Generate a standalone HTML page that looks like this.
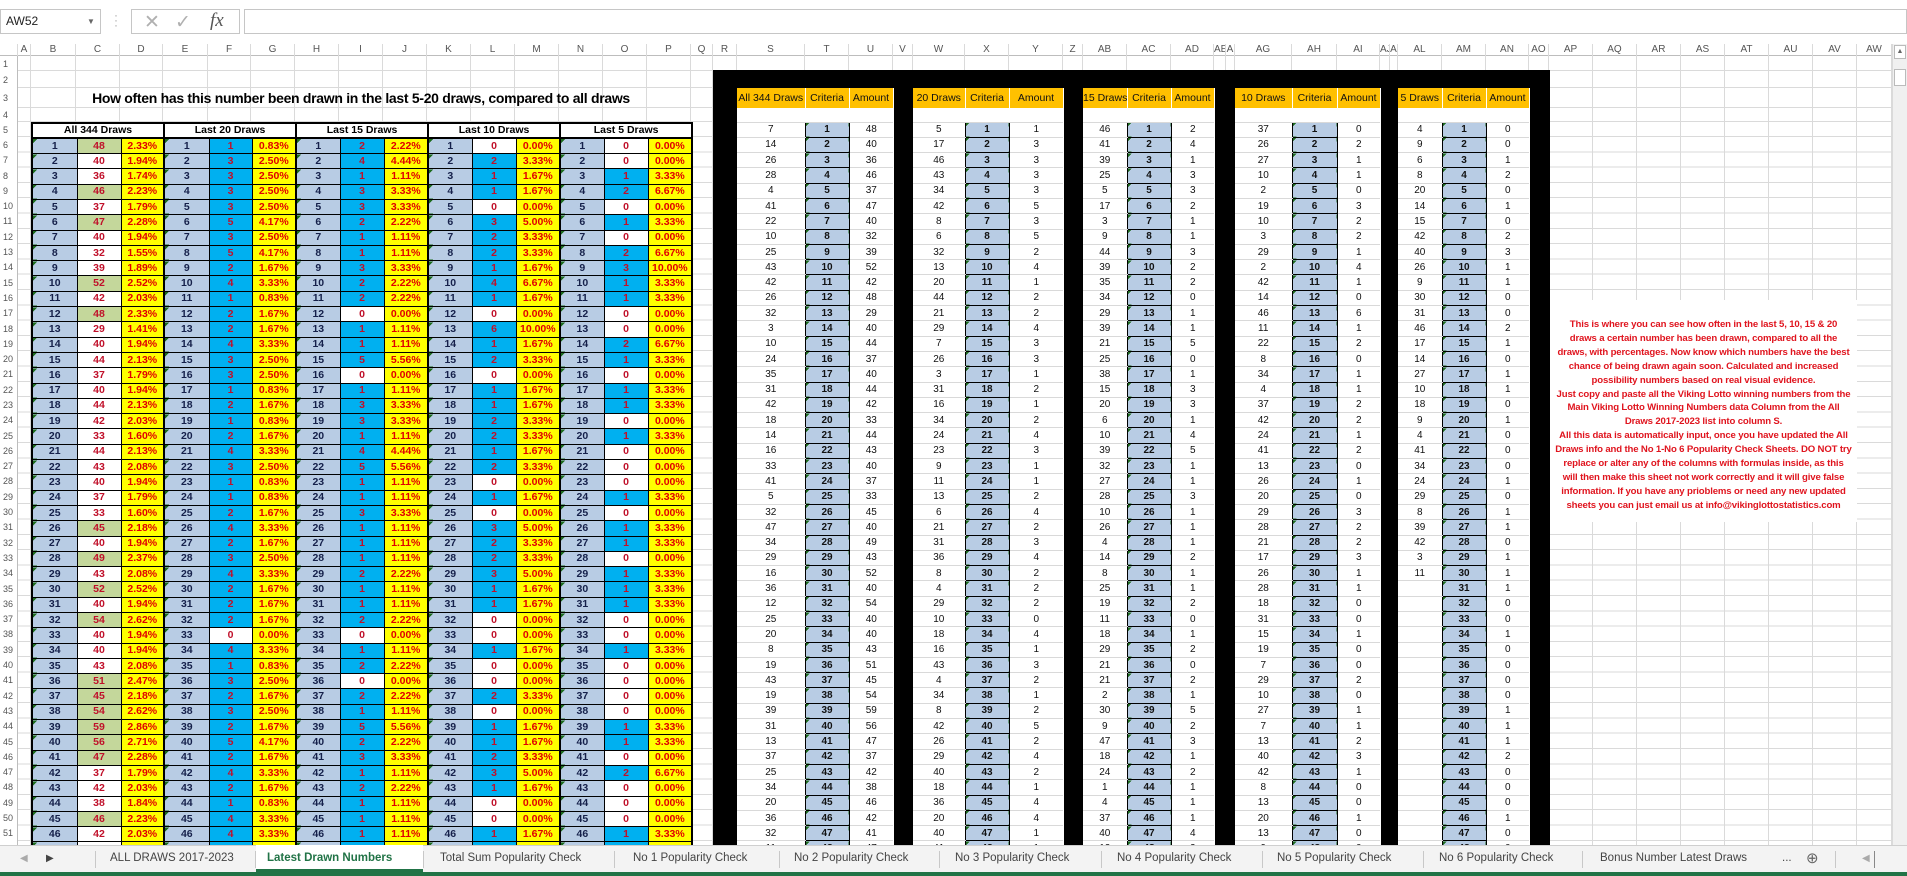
<!DOCTYPE html>
<html><head><meta charset="utf-8">
<style>
*{margin:0;padding:0;box-sizing:border-box}
body{width:1907px;height:876px;overflow:hidden;background:#fff;position:relative;font-family:"Liberation Sans Narrow","Liberation Sans",sans-serif;}
.abs{position:absolute}
#top{left:0;top:0;width:1907px;height:44px;background:#fff}
.box{position:absolute;border:1px solid #c6c6c6;background:#fff}
#ch{left:0;top:44px;height:12px;display:flex;border-bottom:1px solid #bdbdbd}
#ch div{height:12px;font:10px "Liberation Sans",sans-serif;color:#555;text-align:center;line-height:12px;border-right:1px solid #dadada;overflow:hidden;flex:none}
#gv{left:0;top:56px;height:789px;display:flex}
#gv div{height:789px;border-right:1px solid #dadada;flex:none}
#gh{left:18px;top:56px;width:1874px}
#gh div{border-bottom:1px solid #dadada}
#rh{left:0;top:56px;width:18px;border-right:1px solid #bdbdbd;height:789px}
#rh div{font:9px "Liberation Sans",sans-serif;color:#555;padding-left:3px;display:flex;align-items:center}
#title{left:31px;top:88px;width:660px;height:20px;text-align:center;font:bold 14px "Liberation Sans",sans-serif;line-height:20px;letter-spacing:-0.3px}
table{border-collapse:collapse;table-layout:fixed;position:absolute}
#lt{left:31px;top:122px;width:660px}
#lt td{border:1px solid #000;height:15.3px;text-align:center;font-weight:bold;font-size:10.5px;line-height:13px;padding:0;overflow:hidden;white-space:nowrap}
#lt tr.h td{border:2px solid #000;color:#000;background:#fff;font-size:10.5px}
#lt td:nth-child(3n+1){background:#b8cce4 linear-gradient(135deg,#1d6b1d 3px,transparent 3px);color:#15204a;border-left:2px solid #000}
#lt td:nth-child(3n+2){background:#00b0f0;color:#c0102a}
#lt td:nth-child(3n){background:#ff0;color:#e00000}
#lt td:nth-child(15){border-right:2px solid #000}
#lt td:nth-child(2){background:#fff}
#lt td.g{background:#c4d79b}
#lt td.z{background:#fff}
#blk{left:713px;top:70px;width:837px;height:775px;background:#000}
.rt{top:88px;background:#fff}
.rt td{height:15.3px;border-bottom:1px solid #d9d9d9;text-align:center;font-size:10px;line-height:13px;padding:0;color:#111;white-space:nowrap;overflow:hidden}
.rt tr.o td{background:#ffc000;height:20px;font:10.5px "Liberation Sans",sans-serif;color:#111;border:none;border-right:1px solid #fff}
.rt tr.e td{height:14px}
.rt tr.d td:nth-child(2){background:#b8cce4 linear-gradient(135deg,#1d6b1d 3px,transparent 3px);border:1px solid #000;font-weight:bold}
#tb{left:1550px;top:300px;width:307px;height:222px;background:#fff;color:#e0141e;font:bold 9.6px "Liberation Sans",sans-serif;text-align:center;line-height:13.9px;padding-top:18px;white-space:nowrap;letter-spacing:-0.15px}
#vs{left:1892px;top:44px;width:15px;height:801px;background:#f0f0f0;border-left:1px solid #dadada}
#tabs{left:0;top:845px;width:1907px;height:27px;background:#f3f3f3;border-top:1px solid #cfcfcf}
#tabs span{position:absolute;top:6px;font-size:11.5px;color:#444;white-space:nowrap}
#tabs i{position:absolute;top:5px;width:1px;height:17px;background:#c8c8c8}
#grn{left:0;top:872px;width:1907px;height:4px;background:#217346}
</style></head><body>

<div id="top" class="abs">
 <div class="box" style="left:0;top:9px;width:101px;height:25px;font:12px 'Liberation Sans',sans-serif;line-height:23px;padding-left:5px;color:#222">AW52<span style="position:absolute;left:86px;top:0;font-size:8px;color:#666">▼</span></div>
 <div class="abs" style="left:114px;top:13px;color:#aaa;font-size:12px;line-height:5px">·<br>·<br>·</div>
 <div class="box" style="left:131px;top:9px;width:109px;height:25px">
  <span class="abs" style="left:12px;top:1px;font-size:19px;color:#b0b0b0">✕</span>
  <span class="abs" style="left:43px;top:1px;font-size:19px;color:#b0b0b0">✓</span>
  <span class="abs" style="left:78px;top:0;font:italic 19px 'Liberation Serif',serif;color:#555">fx</span>
 </div>
 <div class="box" style="left:244px;top:9px;width:1663px;height:25px"></div>
</div>

<div id="ch" class="abs">
<div style="width:18px"></div><div style="width:13px">A</div><div style="width:45px">B</div><div style="width:44px">C</div><div style="width:43px">D</div><div style="width:45px">E</div><div style="width:43px">F</div><div style="width:44px">G</div><div style="width:44px">H</div><div style="width:44px">I</div><div style="width:44px">J</div><div style="width:44px">K</div><div style="width:44px">L</div><div style="width:44px">M</div><div style="width:44px">N</div><div style="width:44px">O</div><div style="width:44px">P</div><div style="width:22px">Q</div><div style="width:24px">R</div><div style="width:68px">S</div><div style="width:44px">T</div><div style="width:44px">U</div><div style="width:20px">V</div><div style="width:52px">W</div><div style="width:44px">X</div><div style="width:54px">Y</div><div style="width:20px">Z</div><div style="width:44px">AB</div><div style="width:44px">AC</div><div style="width:43px">AD</div><div style="width:12px">AE</div><div style="width:9px">A</div><div style="width:57px">AG</div><div style="width:45px">AH</div><div style="width:43px">AI</div><div style="width:10px">AJ</div><div style="width:8px">A</div><div style="width:44px">AL</div><div style="width:44px">AM</div><div style="width:43px">AN</div><div style="width:20px">AO</div><div style="width:44px">AP</div><div style="width:44px">AQ</div><div style="width:44px">AR</div><div style="width:44px">AS</div><div style="width:44px">AT</div><div style="width:44px">AU</div><div style="width:44px">AV</div><div style="width:35px">AW</div>
</div>

<div id="gv" class="abs">
<div style="width:18px;border:none"></div><div style="width:13px"></div><div style="width:45px"></div><div style="width:44px"></div><div style="width:43px"></div><div style="width:45px"></div><div style="width:43px"></div><div style="width:44px"></div><div style="width:44px"></div><div style="width:44px"></div><div style="width:44px"></div><div style="width:44px"></div><div style="width:44px"></div><div style="width:44px"></div><div style="width:44px"></div><div style="width:44px"></div><div style="width:44px"></div><div style="width:22px"></div><div style="width:24px"></div><div style="width:68px"></div><div style="width:44px"></div><div style="width:44px"></div><div style="width:20px"></div><div style="width:52px"></div><div style="width:44px"></div><div style="width:54px"></div><div style="width:20px"></div><div style="width:44px"></div><div style="width:44px"></div><div style="width:43px"></div><div style="width:12px"></div><div style="width:9px"></div><div style="width:57px"></div><div style="width:45px"></div><div style="width:43px"></div><div style="width:10px"></div><div style="width:8px"></div><div style="width:44px"></div><div style="width:44px"></div><div style="width:43px"></div><div style="width:20px"></div><div style="width:44px"></div><div style="width:44px"></div><div style="width:44px"></div><div style="width:44px"></div><div style="width:44px"></div><div style="width:44px"></div><div style="width:44px"></div><div style="width:35px"></div>
</div>

<div id="gh" class="abs" style="height:789px;background:repeating-linear-gradient(to bottom,transparent 0,transparent 14.3px,#dadada 14.3px,#dadada 15.3px) 0 81.3px/100% 100% no-repeat">
<div style="height:15px"></div><div style="height:17px"></div><div style="height:20px"></div><div style="height:14px"></div><div style="height:15.3px"></div>
</div>

<div id="rh" class="abs">
<div style="height:15px">1</div><div style="height:17px">2</div><div style="height:20px">3</div><div style="height:14px">4</div><div style="height:15.3px">5</div><div style="height:15.3px">6</div><div style="height:15.3px">7</div><div style="height:15.3px">8</div><div style="height:15.3px">9</div><div style="height:15.3px">10</div><div style="height:15.3px">11</div><div style="height:15.3px">12</div><div style="height:15.3px">13</div><div style="height:15.3px">14</div><div style="height:15.3px">15</div><div style="height:15.3px">16</div><div style="height:15.3px">17</div><div style="height:15.3px">18</div><div style="height:15.3px">19</div><div style="height:15.3px">20</div><div style="height:15.3px">21</div><div style="height:15.3px">22</div><div style="height:15.3px">23</div><div style="height:15.3px">24</div><div style="height:15.3px">25</div><div style="height:15.3px">26</div><div style="height:15.3px">27</div><div style="height:15.3px">28</div><div style="height:15.3px">29</div><div style="height:15.3px">30</div><div style="height:15.3px">31</div><div style="height:15.3px">32</div><div style="height:15.3px">33</div><div style="height:15.3px">34</div><div style="height:15.3px">35</div><div style="height:15.3px">36</div><div style="height:15.3px">37</div><div style="height:15.3px">38</div><div style="height:15.3px">39</div><div style="height:15.3px">40</div><div style="height:15.3px">41</div><div style="height:15.3px">42</div><div style="height:15.3px">43</div><div style="height:15.3px">44</div><div style="height:15.3px">45</div><div style="height:15.3px">46</div><div style="height:15.3px">47</div><div style="height:15.3px">48</div><div style="height:15.3px">49</div><div style="height:15.3px">50</div><div style="height:15.3px">51</div><div style="height:15.3px">52</div>
</div>

<div id="title" class="abs">How often has this number been drawn in the last 5-20 draws, compared to all draws</div>

<table id="lt">
<colgroup><col style="width:45px"><col style="width:44px"><col style="width:43px"><col style="width:45px"><col style="width:43px"><col style="width:44px"><col style="width:44px"><col style="width:44px"><col style="width:44px"><col style="width:44px"><col style="width:44px"><col style="width:44px"><col style="width:44px"><col style="width:44px"><col style="width:44px"></colgroup>
<tr class="h"><td colspan="3" style="background:#fff;color:#000">All 344 Draws</td><td colspan="3" style="background:#fff;color:#000">Last 20 Draws</td><td colspan="3" style="background:#fff;color:#000">Last 15 Draws</td><td colspan="3" style="background:#fff;color:#000">Last 10 Draws</td><td colspan="3" style="background:#fff;color:#000">Last 5 Draws</td></tr>
<tr><td>1<td class=g>48<td>2.33%<td>1<td>1<td>0.83%<td>1<td>2<td>2.22%<td>1<td class=z>0<td>0.00%<td>1<td class=z>0<td>0.00%</tr>
<tr><td>2<td>40<td>1.94%<td>2<td>3<td>2.50%<td>2<td>4<td>4.44%<td>2<td>2<td>3.33%<td>2<td class=z>0<td>0.00%</tr>
<tr><td>3<td>36<td>1.74%<td>3<td>3<td>2.50%<td>3<td>1<td>1.11%<td>3<td>1<td>1.67%<td>3<td>1<td>3.33%</tr>
<tr><td>4<td class=g>46<td>2.23%<td>4<td>3<td>2.50%<td>4<td>3<td>3.33%<td>4<td>1<td>1.67%<td>4<td>2<td>6.67%</tr>
<tr><td>5<td>37<td>1.79%<td>5<td>3<td>2.50%<td>5<td>3<td>3.33%<td>5<td class=z>0<td>0.00%<td>5<td class=z>0<td>0.00%</tr>
<tr><td>6<td class=g>47<td>2.28%<td>6<td>5<td>4.17%<td>6<td>2<td>2.22%<td>6<td>3<td>5.00%<td>6<td>1<td>3.33%</tr>
<tr><td>7<td>40<td>1.94%<td>7<td>3<td>2.50%<td>7<td>1<td>1.11%<td>7<td>2<td>3.33%<td>7<td class=z>0<td>0.00%</tr>
<tr><td>8<td>32<td>1.55%<td>8<td>5<td>4.17%<td>8<td>1<td>1.11%<td>8<td>2<td>3.33%<td>8<td>2<td>6.67%</tr>
<tr><td>9<td>39<td>1.89%<td>9<td>2<td>1.67%<td>9<td>3<td>3.33%<td>9<td>1<td>1.67%<td>9<td>3<td>10.00%</tr>
<tr><td>10<td class=g>52<td>2.52%<td>10<td>4<td>3.33%<td>10<td>2<td>2.22%<td>10<td>4<td>6.67%<td>10<td>1<td>3.33%</tr>
<tr><td>11<td>42<td>2.03%<td>11<td>1<td>0.83%<td>11<td>2<td>2.22%<td>11<td>1<td>1.67%<td>11<td>1<td>3.33%</tr>
<tr><td>12<td class=g>48<td>2.33%<td>12<td>2<td>1.67%<td>12<td class=z>0<td>0.00%<td>12<td class=z>0<td>0.00%<td>12<td class=z>0<td>0.00%</tr>
<tr><td>13<td>29<td>1.41%<td>13<td>2<td>1.67%<td>13<td>1<td>1.11%<td>13<td>6<td>10.00%<td>13<td class=z>0<td>0.00%</tr>
<tr><td>14<td>40<td>1.94%<td>14<td>4<td>3.33%<td>14<td>1<td>1.11%<td>14<td>1<td>1.67%<td>14<td>2<td>6.67%</tr>
<tr><td>15<td>44<td>2.13%<td>15<td>3<td>2.50%<td>15<td>5<td>5.56%<td>15<td>2<td>3.33%<td>15<td>1<td>3.33%</tr>
<tr><td>16<td>37<td>1.79%<td>16<td>3<td>2.50%<td>16<td class=z>0<td>0.00%<td>16<td class=z>0<td>0.00%<td>16<td class=z>0<td>0.00%</tr>
<tr><td>17<td>40<td>1.94%<td>17<td>1<td>0.83%<td>17<td>1<td>1.11%<td>17<td>1<td>1.67%<td>17<td>1<td>3.33%</tr>
<tr><td>18<td>44<td>2.13%<td>18<td>2<td>1.67%<td>18<td>3<td>3.33%<td>18<td>1<td>1.67%<td>18<td>1<td>3.33%</tr>
<tr><td>19<td>42<td>2.03%<td>19<td>1<td>0.83%<td>19<td>3<td>3.33%<td>19<td>2<td>3.33%<td>19<td class=z>0<td>0.00%</tr>
<tr><td>20<td>33<td>1.60%<td>20<td>2<td>1.67%<td>20<td>1<td>1.11%<td>20<td>2<td>3.33%<td>20<td>1<td>3.33%</tr>
<tr><td>21<td>44<td>2.13%<td>21<td>4<td>3.33%<td>21<td>4<td>4.44%<td>21<td>1<td>1.67%<td>21<td class=z>0<td>0.00%</tr>
<tr><td>22<td>43<td>2.08%<td>22<td>3<td>2.50%<td>22<td>5<td>5.56%<td>22<td>2<td>3.33%<td>22<td class=z>0<td>0.00%</tr>
<tr><td>23<td>40<td>1.94%<td>23<td>1<td>0.83%<td>23<td>1<td>1.11%<td>23<td class=z>0<td>0.00%<td>23<td class=z>0<td>0.00%</tr>
<tr><td>24<td>37<td>1.79%<td>24<td>1<td>0.83%<td>24<td>1<td>1.11%<td>24<td>1<td>1.67%<td>24<td>1<td>3.33%</tr>
<tr><td>25<td>33<td>1.60%<td>25<td>2<td>1.67%<td>25<td>3<td>3.33%<td>25<td class=z>0<td>0.00%<td>25<td class=z>0<td>0.00%</tr>
<tr><td>26<td class=g>45<td>2.18%<td>26<td>4<td>3.33%<td>26<td>1<td>1.11%<td>26<td>3<td>5.00%<td>26<td>1<td>3.33%</tr>
<tr><td>27<td>40<td>1.94%<td>27<td>2<td>1.67%<td>27<td>1<td>1.11%<td>27<td>2<td>3.33%<td>27<td>1<td>3.33%</tr>
<tr><td>28<td class=g>49<td>2.37%<td>28<td>3<td>2.50%<td>28<td>1<td>1.11%<td>28<td>2<td>3.33%<td>28<td class=z>0<td>0.00%</tr>
<tr><td>29<td>43<td>2.08%<td>29<td>4<td>3.33%<td>29<td>2<td>2.22%<td>29<td>3<td>5.00%<td>29<td>1<td>3.33%</tr>
<tr><td>30<td class=g>52<td>2.52%<td>30<td>2<td>1.67%<td>30<td>1<td>1.11%<td>30<td>1<td>1.67%<td>30<td>1<td>3.33%</tr>
<tr><td>31<td>40<td>1.94%<td>31<td>2<td>1.67%<td>31<td>1<td>1.11%<td>31<td>1<td>1.67%<td>31<td>1<td>3.33%</tr>
<tr><td>32<td class=g>54<td>2.62%<td>32<td>2<td>1.67%<td>32<td>2<td>2.22%<td>32<td class=z>0<td>0.00%<td>32<td class=z>0<td>0.00%</tr>
<tr><td>33<td>40<td>1.94%<td>33<td class=z>0<td>0.00%<td>33<td class=z>0<td>0.00%<td>33<td class=z>0<td>0.00%<td>33<td class=z>0<td>0.00%</tr>
<tr><td>34<td>40<td>1.94%<td>34<td>4<td>3.33%<td>34<td>1<td>1.11%<td>34<td>1<td>1.67%<td>34<td>1<td>3.33%</tr>
<tr><td>35<td>43<td>2.08%<td>35<td>1<td>0.83%<td>35<td>2<td>2.22%<td>35<td class=z>0<td>0.00%<td>35<td class=z>0<td>0.00%</tr>
<tr><td>36<td class=g>51<td>2.47%<td>36<td>3<td>2.50%<td>36<td class=z>0<td>0.00%<td>36<td class=z>0<td>0.00%<td>36<td class=z>0<td>0.00%</tr>
<tr><td>37<td class=g>45<td>2.18%<td>37<td>2<td>1.67%<td>37<td>2<td>2.22%<td>37<td>2<td>3.33%<td>37<td class=z>0<td>0.00%</tr>
<tr><td>38<td class=g>54<td>2.62%<td>38<td>3<td>2.50%<td>38<td>1<td>1.11%<td>38<td class=z>0<td>0.00%<td>38<td class=z>0<td>0.00%</tr>
<tr><td>39<td class=g>59<td>2.86%<td>39<td>2<td>1.67%<td>39<td>5<td>5.56%<td>39<td>1<td>1.67%<td>39<td>1<td>3.33%</tr>
<tr><td>40<td class=g>56<td>2.71%<td>40<td>5<td>4.17%<td>40<td>2<td>2.22%<td>40<td>1<td>1.67%<td>40<td>1<td>3.33%</tr>
<tr><td>41<td class=g>47<td>2.28%<td>41<td>2<td>1.67%<td>41<td>3<td>3.33%<td>41<td>2<td>3.33%<td>41<td class=z>0<td>0.00%</tr>
<tr><td>42<td>37<td>1.79%<td>42<td>4<td>3.33%<td>42<td>1<td>1.11%<td>42<td>3<td>5.00%<td>42<td>2<td>6.67%</tr>
<tr><td>43<td>42<td>2.03%<td>43<td>2<td>1.67%<td>43<td>2<td>2.22%<td>43<td>1<td>1.67%<td>43<td class=z>0<td>0.00%</tr>
<tr><td>44<td>38<td>1.84%<td>44<td>1<td>0.83%<td>44<td>1<td>1.11%<td>44<td class=z>0<td>0.00%<td>44<td class=z>0<td>0.00%</tr>
<tr><td>45<td class=g>46<td>2.23%<td>45<td>4<td>3.33%<td>45<td>1<td>1.11%<td>45<td class=z>0<td>0.00%<td>45<td class=z>0<td>0.00%</tr>
<tr><td>46<td>42<td>2.03%<td>46<td>4<td>3.33%<td>46<td>1<td>1.11%<td>46<td>1<td>1.67%<td>46<td>1<td>3.33%</tr>
<tr><td>47<td>38<td>1.84%<td>47<td>2<td>1.67%<td>47<td>1<td>1.11%<td>47<td>1<td>1.67%<td>47<td>1<td>3.33%</tr>
</table>

<div id="blk" class="abs"></div>

<table class="rt" style="left:737px;width:156px"><colgroup><col style="width:68px"><col style="width:44px"><col style="width:44px"></colgroup>
<tr class="o"><td>All 344 Draws<td>Criteria<td>Amount</tr><tr class="e"><td><td><td></tr>
<tr class="d"><td>7<td>1<td>48</tr><tr class="d"><td>14<td>2<td>40</tr><tr class="d"><td>26<td>3<td>36</tr><tr class="d"><td>28<td>4<td>46</tr><tr class="d"><td>4<td>5<td>37</tr><tr class="d"><td>41<td>6<td>47</tr><tr class="d"><td>22<td>7<td>40</tr><tr class="d"><td>10<td>8<td>32</tr><tr class="d"><td>25<td>9<td>39</tr><tr class="d"><td>43<td>10<td>52</tr><tr class="d"><td>42<td>11<td>42</tr><tr class="d"><td>26<td>12<td>48</tr><tr class="d"><td>32<td>13<td>29</tr><tr class="d"><td>3<td>14<td>40</tr><tr class="d"><td>10<td>15<td>44</tr><tr class="d"><td>24<td>16<td>37</tr><tr class="d"><td>35<td>17<td>40</tr><tr class="d"><td>31<td>18<td>44</tr><tr class="d"><td>42<td>19<td>42</tr><tr class="d"><td>18<td>20<td>33</tr><tr class="d"><td>14<td>21<td>44</tr><tr class="d"><td>16<td>22<td>43</tr><tr class="d"><td>33<td>23<td>40</tr><tr class="d"><td>41<td>24<td>37</tr><tr class="d"><td>5<td>25<td>33</tr><tr class="d"><td>32<td>26<td>45</tr><tr class="d"><td>47<td>27<td>40</tr><tr class="d"><td>34<td>28<td>49</tr><tr class="d"><td>29<td>29<td>43</tr><tr class="d"><td>16<td>30<td>52</tr><tr class="d"><td>36<td>31<td>40</tr><tr class="d"><td>12<td>32<td>54</tr><tr class="d"><td>25<td>33<td>40</tr><tr class="d"><td>20<td>34<td>40</tr><tr class="d"><td>8<td>35<td>43</tr><tr class="d"><td>19<td>36<td>51</tr><tr class="d"><td>43<td>37<td>45</tr><tr class="d"><td>19<td>38<td>54</tr><tr class="d"><td>39<td>39<td>59</tr><tr class="d"><td>31<td>40<td>56</tr><tr class="d"><td>13<td>41<td>47</tr><tr class="d"><td>37<td>42<td>37</tr><tr class="d"><td>25<td>43<td>42</tr><tr class="d"><td>34<td>44<td>38</tr><tr class="d"><td>20<td>45<td>46</tr><tr class="d"><td>36<td>46<td>42</tr><tr class="d"><td>32<td>47<td>41</tr><tr class="d"><td>11<td>48<td>47</tr>
</table>

<table class="rt" style="left:913px;width:150px"><colgroup><col style="width:52px"><col style="width:44px"><col style="width:54px"></colgroup>
<tr class="o"><td>20 Draws<td>Criteria<td>Amount</tr><tr class="e"><td><td><td></tr>
<tr class="d"><td>5<td>1<td>1</tr><tr class="d"><td>17<td>2<td>3</tr><tr class="d"><td>46<td>3<td>3</tr><tr class="d"><td>43<td>4<td>3</tr><tr class="d"><td>34<td>5<td>3</tr><tr class="d"><td>42<td>6<td>5</tr><tr class="d"><td>8<td>7<td>3</tr><tr class="d"><td>6<td>8<td>5</tr><tr class="d"><td>32<td>9<td>2</tr><tr class="d"><td>13<td>10<td>4</tr><tr class="d"><td>20<td>11<td>1</tr><tr class="d"><td>44<td>12<td>2</tr><tr class="d"><td>21<td>13<td>2</tr><tr class="d"><td>29<td>14<td>4</tr><tr class="d"><td>7<td>15<td>3</tr><tr class="d"><td>26<td>16<td>3</tr><tr class="d"><td>3<td>17<td>1</tr><tr class="d"><td>31<td>18<td>2</tr><tr class="d"><td>16<td>19<td>1</tr><tr class="d"><td>34<td>20<td>2</tr><tr class="d"><td>24<td>21<td>4</tr><tr class="d"><td>23<td>22<td>3</tr><tr class="d"><td>9<td>23<td>1</tr><tr class="d"><td>11<td>24<td>1</tr><tr class="d"><td>13<td>25<td>2</tr><tr class="d"><td>6<td>26<td>4</tr><tr class="d"><td>21<td>27<td>2</tr><tr class="d"><td>31<td>28<td>3</tr><tr class="d"><td>36<td>29<td>4</tr><tr class="d"><td>8<td>30<td>2</tr><tr class="d"><td>4<td>31<td>2</tr><tr class="d"><td>29<td>32<td>2</tr><tr class="d"><td>10<td>33<td>0</tr><tr class="d"><td>18<td>34<td>4</tr><tr class="d"><td>16<td>35<td>1</tr><tr class="d"><td>43<td>36<td>3</tr><tr class="d"><td>4<td>37<td>2</tr><tr class="d"><td>34<td>38<td>1</tr><tr class="d"><td>8<td>39<td>2</tr><tr class="d"><td>42<td>40<td>5</tr><tr class="d"><td>26<td>41<td>2</tr><tr class="d"><td>29<td>42<td>4</tr><tr class="d"><td>40<td>43<td>2</tr><tr class="d"><td>18<td>44<td>1</tr><tr class="d"><td>36<td>45<td>4</tr><tr class="d"><td>20<td>46<td>4</tr><tr class="d"><td>40<td>47<td>1</tr><tr class="d"><td>41<td>48<td>1</tr>
</table>

<table class="rt" style="left:1083px;width:131px"><colgroup><col style="width:44px"><col style="width:44px"><col style="width:43px"></colgroup>
<tr class="o"><td>15 Draws<td>Criteria<td>Amount</tr><tr class="e"><td><td><td></tr>
<tr class="d"><td>46<td>1<td>2</tr><tr class="d"><td>41<td>2<td>4</tr><tr class="d"><td>39<td>3<td>1</tr><tr class="d"><td>25<td>4<td>3</tr><tr class="d"><td>5<td>5<td>3</tr><tr class="d"><td>17<td>6<td>2</tr><tr class="d"><td>3<td>7<td>1</tr><tr class="d"><td>9<td>8<td>1</tr><tr class="d"><td>44<td>9<td>3</tr><tr class="d"><td>39<td>10<td>2</tr><tr class="d"><td>35<td>11<td>2</tr><tr class="d"><td>34<td>12<td>0</tr><tr class="d"><td>29<td>13<td>1</tr><tr class="d"><td>39<td>14<td>1</tr><tr class="d"><td>21<td>15<td>5</tr><tr class="d"><td>25<td>16<td>0</tr><tr class="d"><td>38<td>17<td>1</tr><tr class="d"><td>15<td>18<td>3</tr><tr class="d"><td>20<td>19<td>3</tr><tr class="d"><td>6<td>20<td>1</tr><tr class="d"><td>10<td>21<td>4</tr><tr class="d"><td>39<td>22<td>5</tr><tr class="d"><td>32<td>23<td>1</tr><tr class="d"><td>27<td>24<td>1</tr><tr class="d"><td>28<td>25<td>3</tr><tr class="d"><td>10<td>26<td>1</tr><tr class="d"><td>26<td>27<td>1</tr><tr class="d"><td>4<td>28<td>1</tr><tr class="d"><td>14<td>29<td>2</tr><tr class="d"><td>8<td>30<td>1</tr><tr class="d"><td>25<td>31<td>1</tr><tr class="d"><td>19<td>32<td>2</tr><tr class="d"><td>11<td>33<td>0</tr><tr class="d"><td>18<td>34<td>1</tr><tr class="d"><td>29<td>35<td>2</tr><tr class="d"><td>21<td>36<td>0</tr><tr class="d"><td>21<td>37<td>2</tr><tr class="d"><td>2<td>38<td>1</tr><tr class="d"><td>30<td>39<td>5</tr><tr class="d"><td>9<td>40<td>2</tr><tr class="d"><td>47<td>41<td>3</tr><tr class="d"><td>18<td>42<td>1</tr><tr class="d"><td>24<td>43<td>2</tr><tr class="d"><td>1<td>44<td>1</tr><tr class="d"><td>4<td>45<td>1</tr><tr class="d"><td>37<td>46<td>1</tr><tr class="d"><td>40<td>47<td>4</tr><tr class="d"><td>12<td>48<td>2</tr>
</table>

<table class="rt" style="left:1235px;width:145px"><colgroup><col style="width:57px"><col style="width:45px"><col style="width:43px"></colgroup>
<tr class="o"><td>10 Draws<td>Criteria<td>Amount</tr><tr class="e"><td><td><td></tr>
<tr class="d"><td>37<td>1<td>0</tr><tr class="d"><td>26<td>2<td>2</tr><tr class="d"><td>27<td>3<td>1</tr><tr class="d"><td>10<td>4<td>1</tr><tr class="d"><td>2<td>5<td>0</tr><tr class="d"><td>19<td>6<td>3</tr><tr class="d"><td>10<td>7<td>2</tr><tr class="d"><td>3<td>8<td>2</tr><tr class="d"><td>29<td>9<td>1</tr><tr class="d"><td>2<td>10<td>4</tr><tr class="d"><td>42<td>11<td>1</tr><tr class="d"><td>14<td>12<td>0</tr><tr class="d"><td>46<td>13<td>6</tr><tr class="d"><td>11<td>14<td>1</tr><tr class="d"><td>22<td>15<td>2</tr><tr class="d"><td>8<td>16<td>0</tr><tr class="d"><td>34<td>17<td>1</tr><tr class="d"><td>4<td>18<td>1</tr><tr class="d"><td>37<td>19<td>2</tr><tr class="d"><td>42<td>20<td>2</tr><tr class="d"><td>24<td>21<td>1</tr><tr class="d"><td>41<td>22<td>2</tr><tr class="d"><td>13<td>23<td>0</tr><tr class="d"><td>26<td>24<td>1</tr><tr class="d"><td>20<td>25<td>0</tr><tr class="d"><td>29<td>26<td>3</tr><tr class="d"><td>28<td>27<td>2</tr><tr class="d"><td>21<td>28<td>2</tr><tr class="d"><td>17<td>29<td>3</tr><tr class="d"><td>26<td>30<td>1</tr><tr class="d"><td>28<td>31<td>1</tr><tr class="d"><td>18<td>32<td>0</tr><tr class="d"><td>31<td>33<td>0</tr><tr class="d"><td>15<td>34<td>1</tr><tr class="d"><td>19<td>35<td>0</tr><tr class="d"><td>7<td>36<td>0</tr><tr class="d"><td>29<td>37<td>2</tr><tr class="d"><td>10<td>38<td>0</tr><tr class="d"><td>27<td>39<td>1</tr><tr class="d"><td>7<td>40<td>1</tr><tr class="d"><td>13<td>41<td>2</tr><tr class="d"><td>40<td>42<td>3</tr><tr class="d"><td>42<td>43<td>1</tr><tr class="d"><td>8<td>44<td>0</tr><tr class="d"><td>13<td>45<td>0</tr><tr class="d"><td>20<td>46<td>1</tr><tr class="d"><td>13<td>47<td>0</tr><tr class="d"><td>9<td>48<td>0</tr>
</table>

<table class="rt" style="left:1398px;width:131px"><colgroup><col style="width:44px"><col style="width:44px"><col style="width:43px"></colgroup>
<tr class="o"><td>5 Draws<td>Criteria<td>Amount</tr><tr class="e"><td><td><td></tr>
<tr class="d"><td>4<td>1<td>0</tr><tr class="d"><td>9<td>2<td>0</tr><tr class="d"><td>6<td>3<td>1</tr><tr class="d"><td>8<td>4<td>2</tr><tr class="d"><td>20<td>5<td>0</tr><tr class="d"><td>14<td>6<td>1</tr><tr class="d"><td>15<td>7<td>0</tr><tr class="d"><td>42<td>8<td>2</tr><tr class="d"><td>40<td>9<td>3</tr><tr class="d"><td>26<td>10<td>1</tr><tr class="d"><td>9<td>11<td>1</tr><tr class="d"><td>30<td>12<td>0</tr><tr class="d"><td>31<td>13<td>0</tr><tr class="d"><td>46<td>14<td>2</tr><tr class="d"><td>17<td>15<td>1</tr><tr class="d"><td>14<td>16<td>0</tr><tr class="d"><td>27<td>17<td>1</tr><tr class="d"><td>10<td>18<td>1</tr><tr class="d"><td>18<td>19<td>0</tr><tr class="d"><td>9<td>20<td>1</tr><tr class="d"><td>4<td>21<td>0</tr><tr class="d"><td>41<td>22<td>0</tr><tr class="d"><td>34<td>23<td>0</tr><tr class="d"><td>24<td>24<td>1</tr><tr class="d"><td>29<td>25<td>0</tr><tr class="d"><td>8<td>26<td>1</tr><tr class="d"><td>39<td>27<td>1</tr><tr class="d"><td>42<td>28<td>0</tr><tr class="d"><td>3<td>29<td>1</tr><tr class="d"><td>11<td>30<td>1</tr><tr class="d"><td><td>31<td>1</tr><tr class="d"><td><td>32<td>0</tr><tr class="d"><td><td>33<td>0</tr><tr class="d"><td><td>34<td>1</tr><tr class="d"><td><td>35<td>0</tr><tr class="d"><td><td>36<td>0</tr><tr class="d"><td><td>37<td>0</tr><tr class="d"><td><td>38<td>0</tr><tr class="d"><td><td>39<td>1</tr><tr class="d"><td><td>40<td>1</tr><tr class="d"><td><td>41<td>1</tr><tr class="d"><td><td>42<td>2</tr><tr class="d"><td><td>43<td>0</tr><tr class="d"><td><td>44<td>0</tr><tr class="d"><td><td>45<td>0</tr><tr class="d"><td><td>46<td>1</tr><tr class="d"><td><td>47<td>0</tr><tr class="d"><td><td>48<td>0</tr>
</table>

<div id="tb" class="abs">This is where you can see how often in the last 5, 10, 15 &amp; 20<br>draws a certain number has been drawn, compared to all the<br>draws, with percentages. Now know which numbers have the best<br>chance of being drawn again soon. Calculated and increased<br>possibility numbers based on real visual evidence.<br>Just copy and paste all the Viking Lotto winning numbers from the<br>Main Viking Lotto Winning Numbers data Column from the All<br>Draws 2017-2023 list into column S.<br>All this data is automatically input, once you have updated the All<br>Draws info and the No 1-No 6 Popularity Check Sheets. DO NOT try<br>replace or alter any of the columns with formulas inside, as this<br>will then make this sheet not work correctly and it will give false<br>information. If you have any prioblems or need any new updated<br>sheets you can just email us at info@vikinglottostatistics.com</div>

<div id="vs" class="abs"><div style="position:absolute;left:1px;top:1px;width:12px;height:14px;border:1px solid #bbb;background:#fff;font-size:7px;text-align:center;line-height:12px;color:#666">▲</div><div style="position:absolute;left:1px;top:25px;width:12px;height:17px;border:1px solid #bbb;background:#fff"></div></div>

<div id="tabs" class="abs">
<span style="left:20px;color:#aaa;font-size:10px;top:7px">◀</span><span style="left:46px;color:#444;font-size:10px;top:7px">▶</span>
<i style="left:95px"></i>
<span style="left:110px">ALL DRAWS 2017-2023</span>
<i style="left:255px"></i>
<div style="position:absolute;left:256px;top:-1px;width:167px;height:27px;background:#fff;border-bottom:3px solid #217346"></div>
<span style="left:267px;color:#217346;font-weight:bold">Latest Drawn Numbers</span>
<i style="left:423px"></i>
<span style="left:440px">Total Sum Popularity Check</span>
<i style="left:614px"></i>
<span style="left:633px">No 1 Popularity Check</span>
<i style="left:779px"></i>
<span style="left:794px">No 2 Popularity Check</span>
<i style="left:939px"></i>
<span style="left:955px">No 3 Popularity Check</span>
<i style="left:1101px"></i>
<span style="left:1117px">No 4 Popularity Check</span>
<i style="left:1262px"></i>
<span style="left:1277px">No 5 Popularity Check</span>
<i style="left:1423px"></i>
<span style="left:1439px">No 6 Popularity Check</span>
<i style="left:1582px"></i>
<span style="left:1600px">Bonus Number Latest Draws</span>
<span style="left:1782px">...</span>
<span style="left:1806px;font-size:15px;top:3px;color:#666">⊕</span>
<i style="left:1835px"></i>
<span style="left:1862px;font-size:10px;top:7px;color:#aaa">◀</span>
<i style="left:1874px;background:#888"></i>
</div>
<div id="grn" class="abs"></div>
</body></html>
